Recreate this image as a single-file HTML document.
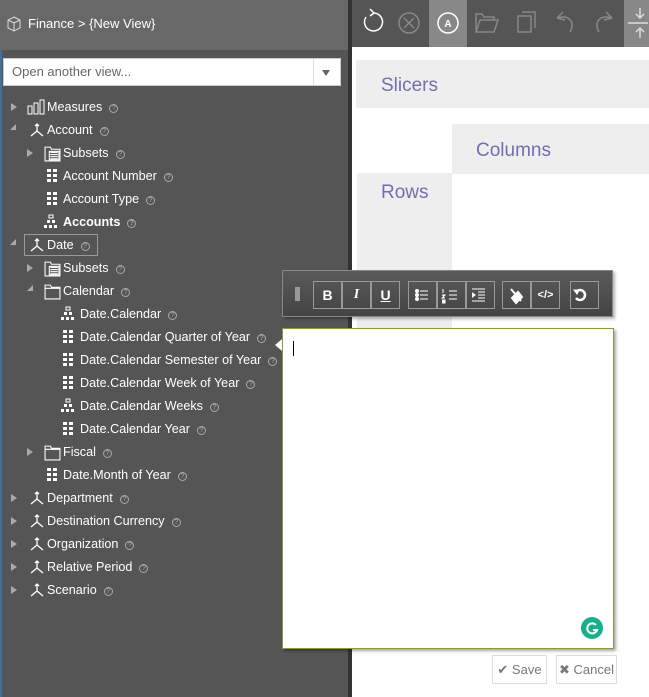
<!DOCTYPE html>
<html><head><meta charset="utf-8"><style>
*{margin:0;padding:0;box-sizing:border-box}
body{width:649px;height:697px;overflow:hidden;background:#fff;font-family:"Segoe UI","Liberation Sans",sans-serif;position:relative}
.abs{position:absolute}
#left{left:0;top:0;width:348px;height:697px;background:#555;border-left:2px solid #3f6f9f}
#lhead{left:0;top:0;width:348px;height:50px;background:#686868}
#sep{left:348px;top:0;width:4px;height:697px;background:#333}
.row{position:absolute;height:20px;line-height:21px;font-size:12.6px;color:#fff;white-space:nowrap}
.q{display:inline-block;width:9px;height:9px;border:1px solid #aaa;border-radius:50%;font-size:7px;line-height:7px;text-align:center;color:#aaa;margin-left:7px;vertical-align:1px}
.ar{position:absolute;width:0;height:0}
.ar.r{border-left:6px solid #aaa;border-top:4px solid transparent;border-bottom:4px solid transparent}
.ar.d{border-right:6px solid #aaa;border-top:6px solid transparent}
.box{background:#eee;color:#7070b0;font-size:19px;position:absolute}
.fb{position:absolute;top:281px;width:29px;height:28px;border:1px solid #999;color:#fff;font-weight:bold;font-size:14px;text-align:center;line-height:26px;font-family:"Liberation Sans",sans-serif}
.btn{position:absolute;top:655px;height:29px;border:1px solid #ddd;font-size:13px;color:#777;line-height:27px;text-align:center;font-family:'Liberation Sans',sans-serif;white-space:nowrap}
</style></head><body>
<svg width="0" height="0" style="position:absolute">
<defs>
<symbol id="dim" viewBox="0 0 16 16"><path d="M8 2v7M8 9l-6 5M8 9l6 5M6 4l2-2 2 2" stroke="#fff" stroke-width="1.3" fill="none"/></symbol>
<symbol id="attr" viewBox="0 0 16 16"><g fill="#fff"><rect x="3" y="1" width="4" height="3"/><rect x="9" y="1" width="4" height="3"/><rect x="3" y="6" width="4" height="3"/><rect x="9" y="6" width="4" height="3"/><rect x="3" y="11" width="4" height="3"/><rect x="9" y="11" width="4" height="3"/></g></symbol>
<symbol id="hier" viewBox="0 0 16 16"><g fill="#fff"><rect x="6" y="1" width="4" height="3" fill="none" stroke="#fff"/><rect x="4" y="6" width="3" height="3"/><rect x="9" y="6" width="3" height="3"/><rect x="1" y="11" width="3" height="3"/><rect x="6" y="11" width="3" height="3"/><rect x="11" y="11" width="3" height="3"/></g></symbol>
<symbol id="fold" viewBox="0 0 16 16"><path d="M1 2h5l1 2h8v11H1z M1 5h14" stroke="#fff" fill="none"/></symbol>
<symbol id="sub" viewBox="0 0 16 16"><path d="M1 2h5l1 2h8v11H1z" stroke="#fff" fill="none"/><path d="M6 7h7M6 9h7M6 11h7M6 13h7" stroke="#fff"/><rect x="5" y="6" width="9" height="8" fill="none" stroke="#fff"/></symbol>
<symbol id="meas" viewBox="0 0 20 16"><path d="M1 7h4v8H1zM7 4h4v11H7zM13 1h4v14h-4z" stroke="#fff" fill="none"/></symbol>
</defs></svg>

<div id="left" class="abs"></div>
<div id="lhead" class="abs"></div>
<svg class="abs" style="left:6px;top:16px" width="16" height="16" viewBox="0 0 16 16"><path d="M8 1l6 3v8l-6 3-6-3V4zM2 4l6 3 6-3M8 7v8" stroke="#ddd" fill="none"/></svg>
<div class="abs" style="left:28px;top:16px;color:#fff;font-size:13px">Finance &gt; {New View}</div>
<div class="abs" style="left:3px;top:58px;width:338px;height:28px;background:#fff;border:1px solid #ccc;font-size:13px;color:#666;line-height:26px;padding-left:8px">Open another view...</div>
<div class="abs" style="left:313px;top:59px;width:1px;height:26px;background:#ddd"></div>
<div class="abs" style="left:322px;top:70px;border-top:6px solid #666;border-left:4px solid transparent;border-right:4px solid transparent"></div>

<div class="ar r" style="left:11px;top:103px"></div><svg class="abs" style="left:27px;top:99px" width="20" height="16"><use href="#meas"/></svg><div class="row" style="left:47px;top:97px">Measures<span class="q">?</span></div>
<div class="ar d" style="left:10px;top:124px"></div><svg class="abs" style="left:29px;top:122px" width="16" height="16"><use href="#dim"/></svg><div class="row" style="left:47px;top:120px">Account<span class="q">?</span></div>
<div class="ar r" style="left:27px;top:149px"></div><svg class="abs" style="left:44px;top:145px" width="17" height="17"><use href="#sub"/></svg><div class="row" style="left:63px;top:143px">Subsets<span class="q">?</span></div>
<svg class="abs" style="left:44px;top:168px" width="16" height="16"><use href="#attr"/></svg><div class="row" style="left:63px;top:166px">Account Number<span class="q">?</span></div>
<svg class="abs" style="left:44px;top:191px" width="16" height="16"><use href="#attr"/></svg><div class="row" style="left:63px;top:189px">Account Type<span class="q">?</span></div>
<svg class="abs" style="left:43px;top:214px" width="16" height="16"><use href="#hier"/></svg><div class="row" style="left:63px;top:212px;font-weight:bold">Accounts<span class="q">?</span></div>
<div class="ar d" style="left:10px;top:239px"></div>
<div class="abs" style="left:24px;top:234px;width:74px;height:22px;border:1px solid #999"></div>
<svg class="abs" style="left:29px;top:237px" width="16" height="16"><use href="#dim"/></svg><div class="row" style="left:47px;top:235px">Date<span class="q">?</span></div>
<div class="ar r" style="left:27px;top:264px"></div><svg class="abs" style="left:44px;top:260px" width="17" height="17"><use href="#sub"/></svg><div class="row" style="left:63px;top:258px">Subsets<span class="q">?</span></div>
<div class="ar d" style="left:27px;top:285px"></div><svg class="abs" style="left:44px;top:283px" width="17" height="17"><use href="#fold"/></svg><div class="row" style="left:63px;top:281px">Calendar<span class="q">?</span></div>
<svg class="abs" style="left:60px;top:306px" width="16" height="16"><use href="#hier"/></svg><div class="row" style="left:80px;top:304px">Date.Calendar<span class="q">?</span></div>
<svg class="abs" style="left:60px;top:329px" width="16" height="16"><use href="#attr"/></svg><div class="row" style="left:80px;top:327px">Date.Calendar Quarter of Year<span class="q">?</span></div>
<svg class="abs" style="left:60px;top:352px" width="16" height="16"><use href="#attr"/></svg><div class="row" style="left:80px;top:350px">Date.Calendar Semester of Year<span class="q">?</span></div>
<svg class="abs" style="left:60px;top:375px" width="16" height="16"><use href="#attr"/></svg><div class="row" style="left:80px;top:373px">Date.Calendar Week of Year<span class="q">?</span></div>
<svg class="abs" style="left:60px;top:398px" width="16" height="16"><use href="#hier"/></svg><div class="row" style="left:80px;top:396px">Date.Calendar Weeks<span class="q">?</span></div>
<svg class="abs" style="left:60px;top:421px" width="16" height="16"><use href="#attr"/></svg><div class="row" style="left:80px;top:419px">Date.Calendar Year<span class="q">?</span></div>
<div class="ar r" style="left:27px;top:448px"></div><svg class="abs" style="left:44px;top:444px" width="17" height="17"><use href="#fold"/></svg><div class="row" style="left:63px;top:442px">Fiscal<span class="q">?</span></div>
<svg class="abs" style="left:44px;top:467px" width="16" height="16"><use href="#attr"/></svg><div class="row" style="left:63px;top:465px">Date.Month of Year<span class="q">?</span></div>
<div class="ar r" style="left:11px;top:494px"></div><svg class="abs" style="left:29px;top:490px" width="16" height="16"><use href="#dim"/></svg><div class="row" style="left:47px;top:488px">Department<span class="q">?</span></div>
<div class="ar r" style="left:11px;top:517px"></div><svg class="abs" style="left:29px;top:513px" width="16" height="16"><use href="#dim"/></svg><div class="row" style="left:47px;top:511px">Destination Currency<span class="q">?</span></div>
<div class="ar r" style="left:11px;top:540px"></div><svg class="abs" style="left:29px;top:536px" width="16" height="16"><use href="#dim"/></svg><div class="row" style="left:47px;top:534px">Organization<span class="q">?</span></div>
<div class="ar r" style="left:11px;top:563px"></div><svg class="abs" style="left:29px;top:559px" width="16" height="16"><use href="#dim"/></svg><div class="row" style="left:47px;top:557px">Relative Period<span class="q">?</span></div>
<div class="ar r" style="left:11px;top:586px"></div><svg class="abs" style="left:29px;top:582px" width="16" height="16"><use href="#dim"/></svg><div class="row" style="left:47px;top:580px">Scenario<span class="q">?</span></div>

<div id="sep" class="abs"></div>

<div class="abs" style="left:352px;top:0;width:297px;height:47px;background:#555"></div>
<div class="abs" style="left:429px;top:0;width:38px;height:47px;background:#888"></div>
<div class="abs" style="left:624px;top:0;width:25px;height:47px;background:#888"></div>
<svg class="abs" style="left:352px;top:0" width="297" height="47" fill="none" stroke-width="1.5">
<path d="M14 17a9 9 0 1 0 8-4" stroke="#fff"/><path d="M18 9l4 4-4 3" stroke="#fff"/>
<circle cx="57" cy="23" r="10" stroke="#888"/><path d="M52 18l10 10M62 18l-10 10" stroke="#888"/>
<circle cx="96" cy="23" r="10" stroke="#fff"/><text x="96" y="27" font-size="10" fill="#fff" stroke="none" text-anchor="middle" font-family="Liberation Sans" font-weight="bold">A</text>
<path d="M124 32h18l4-12h-18zM124 32V14h6l2 3h10v3" stroke="#888"/>
<path d="M166 16h13v16h-13zM170 12h13v16" stroke="#888"/>
<path d="M205 18l6-6M205 18l8 2M206 18c10-4 18 4 12 14" stroke="#888"/>
<path d="M260 18l-6-6M260 18l-8 2M259 18c-10-4-18 4-12 14" stroke="#888"/>
<path d="M288 8v10M284 14l4 4 4-4M276 23h20M288 38v-10M284 32l4-4 4 4" stroke="#ddd"/>
</svg>

<div class="box" style="left:356px;top:60px;width:293px;height:48px;line-height:52px;padding-left:25px">Slicers</div>
<div class="box" style="left:452px;top:124px;width:197px;height:50px;line-height:54px;padding-left:24px">Columns</div>
<div class="box" style="left:357px;top:173px;width:95px;height:160px;padding-left:24px;padding-top:9px">Rows</div>

<div class="abs" style="left:282px;top:270px;width:331px;height:47px;background:linear-gradient(#5a5a5a,#444);border:1px solid #888;box-shadow:2px 2px 3px rgba(0,0,0,.3)"></div>
<div class="abs" style="left:295px;top:287px;width:5px;height:14px;background:#999"></div>
<div class="fb" style="left:313px">B</div>
<div class="fb" style="left:342px;font-style:italic;font-family:'Liberation Serif',serif">I</div>
<div class="fb" style="left:371px;text-decoration:underline">U</div>
<div class="fb" style="left:408px"></div><div class="fb" style="left:437px"></div><div class="fb" style="left:466px"></div>
<div class="fb" style="left:502px"></div><div class="fb" style="left:531px;font-size:11px">&lt;/&gt;</div>
<div class="fb" style="left:570px"></div>
<svg class="abs" style="left:408px;top:281px" width="200" height="28" stroke="#fff" fill="#fff">
<circle cx="9" cy="10" r="1.5"/><circle cx="9" cy="14" r="1.5"/><circle cx="9" cy="18" r="1.5"/><path d="M12 10h8M12 14h8M12 18h8"/>
<path d="M41 10h8M41 14h8M41 18h8"/><path d="M35 8v4M34 14h3l-3 3h3M34 19h3v3h-3" stroke-width="1"/>
<path d="M64 8h13M70 11h7M70 14h7M70 17h7M64 20h13"/><path d="M64 11l4 3-4 3z" stroke="none"/>
<path d="M103 8l10 12M104 17l6-6 4 5-6 6z" stroke-width="2"/>
<path d="M169 10a5 5 0 1 1-1 7" stroke-width="2.5" fill="none"/><path d="M166 9l3 4 2-4z"/>
</svg>

<div class="abs" style="left:275px;top:339px;border-right:7px solid #fff;border-top:6px solid transparent;border-bottom:6px solid transparent"></div>
<div class="abs" style="left:282px;top:328px;width:332px;height:321px;background:#fff;border:1px solid #8b9a3a;box-shadow:2px 2px 3px rgba(0,0,0,.35)"></div>
<div class="abs" style="left:293px;top:341px;width:1px;height:15px;background:#000"></div>
<div class="abs" style="left:581px;top:617px;width:22px;height:22px;border-radius:50%;background:#16b08a"></div>
<svg class="abs" style="left:581px;top:617px" width="22" height="22"><path d="M15 8a5 5 0 1 0 1 5h-4" stroke="#fff" stroke-width="2" fill="none"/></svg>

<div class="btn" style="left:492px;width:55px">✔ Save</div>
<div class="btn" style="left:556px;width:61px">✖ Cancel</div>
</body></html>
